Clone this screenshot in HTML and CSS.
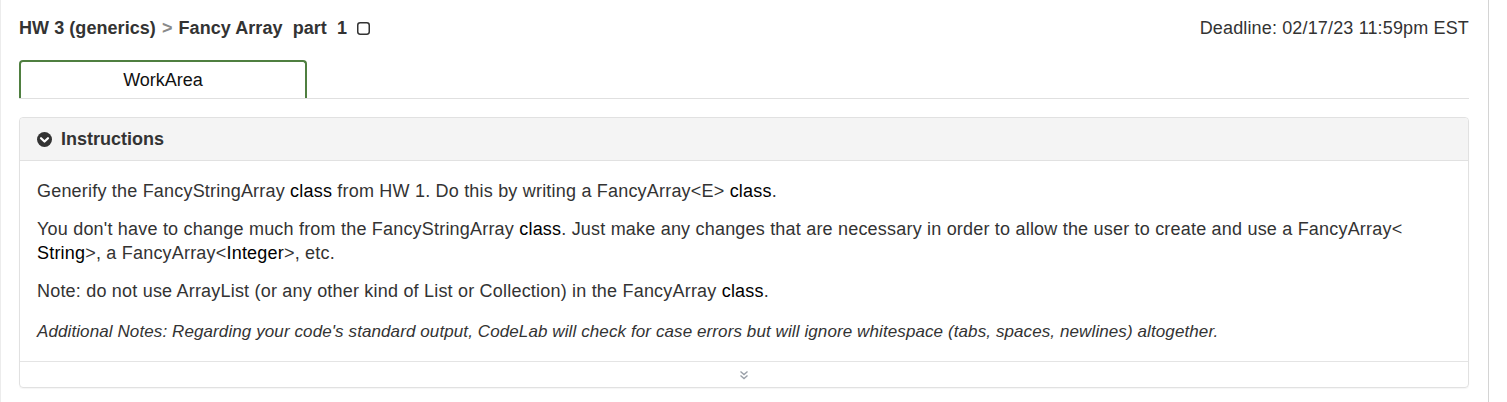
FILE: index.html
```html
<!DOCTYPE html>
<html>
<head>
<meta charset="utf-8">
<link rel="stylesheet" href="styles.css">
</head>
<body>
<div class="page">
  <div class="titlebar">
    <div class="crumbs">
      <span class="crumb">HW 3 (generics)</span>
      <span class="sep">&gt;</span>
      <span class="crumb">Fancy Array&nbsp; part&nbsp; 1</span>
      <svg class="box" width="13" height="13" viewBox="0 0 13 13"><rect x="0.75" y="0.75" width="11.5" height="11.5" rx="2.4" fill="none" stroke="#333" stroke-width="1.5"/></svg>
    </div>
    <div class="deadline">Deadline: 02/17/23 11:59pm EST</div>
  </div>

  <div class="tabs">
    <div class="tab">WorkArea</div>
  </div>

  <div class="panel">
    <div class="panel-head">
      <svg class="chev-circle" width="15" height="15" viewBox="0 0 16 16"><circle cx="8" cy="8" r="8" fill="#333"/><path d="M4.3 6.6 L8 10.2 L11.7 6.6" fill="none" stroke="#fff" stroke-width="2.4" stroke-linecap="round" stroke-linejoin="round"/></svg>
      <span class="panel-title">Instructions</span>
    </div>
    <div class="panel-body">
      <p>Generify the FancyStringArray <span class="dk">class</span> from HW 1. Do this by writing a FancyArray&lt;E&gt; <span class="dk">class</span>.</p>
      <p>You don't have to change much from the FancyStringArray <span class="dk">class</span>. Just make any changes that are necessary in order to allow the user to create and use a FancyArray&lt; <span class="dk">String</span>&gt;, a FancyArray&lt;<span class="dk">Integer</span>&gt;, etc.</p>
      <p>Note: do not use ArrayList (or any other kind of List or Collection) in the FancyArray <span class="dk">class</span>.</p>
      <p class="note">Additional Notes: Regarding your code's standard output, CodeLab will check for case errors but will ignore whitespace (tabs, spaces, newlines) altogether.</p>
    </div>
    <div class="panel-foot">
      <svg width="12" height="12" viewBox="0 0 12 12"><path d="M2.5 2.5 L6 5.5 L9.5 2.5 M2.5 6.5 L6 9.5 L9.5 6.5" fill="none" stroke="#9aa0a8" stroke-width="1.4"/></svg>
    </div>
  </div>
</div>
</body>
</html>
```

FILE: styles.css
```css
html, body {
  margin: 0;
  padding: 0;
  background: #fff;
}
body {
  font-family: "Liberation Sans", Arial, sans-serif;
  color: #333;
  font-size: 18px;
}
.page {
  width: 1450px;
  min-height: 402px;
  box-sizing: content-box;
  border-left: 1px solid #ececec;
  border-right: 1px solid #d4d4d4;
  padding: 0 19px 0 18px;
}
.titlebar {
  display: flex;
  justify-content: space-between;
  align-items: center;
  height: 28px;
  padding-top: 14px;
}
.crumbs {
  display: flex;
  align-items: center;
  font-weight: bold;
  letter-spacing: 0.06px;
}
.crumb {
  white-space: pre;
}
.sep {
  color: #8a8a8a;
  margin: 0 6px;
}
.box {
  margin-left: 10px;
}
.deadline {
  letter-spacing: 0.15px;
}
.tabs {
  margin-top: 18px;
  border-bottom: 1px solid #e0e0e0;
  display: flex;
}
.tab {
  width: 284px;
  height: 36px;
  border: 2px solid #4f7f40;
  border-bottom: none;
  border-radius: 4px 4px 0 0;
  display: flex;
  align-items: center;
  justify-content: center;
  color: #111;
  box-sizing: content-box;
}
.panel {
  margin-top: 18px;
  border: 1px solid #e1e1e1;
  border-radius: 4px;
  box-shadow: 0 1px 1px rgba(0,0,0,0.04);
}
.panel-head {
  background: #f4f4f4;
  height: 42px;
  border-bottom: 1px solid #e1e1e1;
  border-radius: 4px 4px 0 0;
  display: flex;
  align-items: center;
  padding-left: 17px;
}
.chev-circle {
  margin-right: 9px;
}
.panel-title {
  font-weight: bold;
  font-size: 18px;
}
.panel-body {
  padding: 18px 17px 3px;
}
.panel-body p {
  margin: 0 0 14px;
  line-height: 24px;
  letter-spacing: 0.2px;
}
.dk {
  color: #000;
}
.panel-body p.note {
  font-style: italic;
  font-size: 17px;
  letter-spacing: 0.1px;
  margin-top: 17px;
  margin-bottom: 14px;
}
.panel-foot {
  height: 25px;
  border-top: 1px solid #e4e4e4;
  display: flex;
  justify-content: center;
  align-items: center;
}
```
